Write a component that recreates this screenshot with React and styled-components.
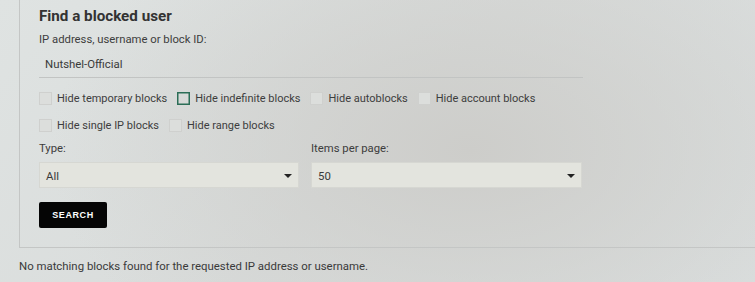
import React from "react";
import styled, { createGlobalStyle } from "styled-components";

const GlobalStyle = createGlobalStyle`
  html, body {
    margin: 0;
    padding: 0;
  }
  body {
    width: 755px;
    height: 282px;
    overflow: hidden;
    font-family: Roboto, "Liberation Sans", Arial, sans-serif;
    color: #3a3a3a;
    background:
      radial-gradient(ellipse 420px 260px at 470px 150px, #cdcdca 0%, rgba(205,205,202,0) 100%),
      linear-gradient(135deg, #dfe3e2 0%, #d9dcdb 50%, #dbdfdf 100%);
  }
`;

const filters = [
  [
    { label: "Hide temporary blocks" },
    { label: "Hide indefinite blocks", focused: true },
    { label: "Hide autoblocks" },
    { label: "Hide account blocks" },
  ],
  [{ label: "Hide single IP blocks" }, { label: "Hide range blocks" }],
];

const App = () => {
  return (
    <>
      <GlobalStyle />
      <Page>
        <Panel>
          <Heading>Find a blocked user</Heading>
          <Label>IP address, username or block ID:</Label>
          <TextField>Nutshel-Official</TextField>
          <Checks>
            {filters.map((row, i) => (
              <CheckRow key={i}>
                {row.map((f) => (
                  <CheckItem key={f.label}>
                    <Box $focused={f.focused} />
                    {f.label}
                  </CheckItem>
                ))}
              </CheckRow>
            ))}
          </Checks>
          <SelectGrid>
            <Field>
              <Label>Type:</Label>
              <Select>
                All
                <Caret />
              </Select>
            </Field>
            <Field>
              <Label>Items per page:</Label>
              <Select>
                50
                <Caret />
              </Select>
            </Field>
          </SelectGrid>
          <SearchButton>Search</SearchButton>
        </Panel>
        <Notice>No matching blocks found for the requested IP address or username.</Notice>
      </Page>
    </>
  );
};

const Page = styled.div`
  display: flex;
  flex-direction: column;
  padding-left: 19px;
`;

const Panel = styled.div`
  border-left: 1px solid #c4c6c5;
  border-bottom: 1px solid #c4c6c5;
  padding: 8px 0 19px 19px;
  display: flex;
  flex-direction: column;
`;

const Heading = styled.h2`
  margin: 0 0 7px;
  font-size: 15.2px;
  line-height: 17px;
  font-weight: 700;
  color: #333;
`;

const Label = styled.div`
  font-size: 11.3px;
  line-height: 15px;
  color: #3d3d3d;
`;

const TextField = styled.div`
  width: 538px;
  height: 26px;
  margin-top: 4px;
  padding-left: 6px;
  font-size: 11.4px;
  line-height: 26px;
  color: #3a3a3a;
  border-bottom: 1px solid #c2c4c3;
`;

const Checks = styled.div`
  display: flex;
  flex-direction: column;
  margin-top: 7px;
`;

const CheckRow = styled.div`
  display: flex;
  gap: 10px;
  height: 27px;
  align-items: center;
`;

const CheckItem = styled.label`
  display: flex;
  align-items: center;
  gap: 5px;
  font-size: 11px;
  color: #3d3d3d;
`;

const Box = styled.span`
  width: 11px;
  height: 11px;
  border: 1px solid ${(p) => (p.$focused ? "#2b6e57" : "#cfd0ce")};
  background: ${(p) => (p.$focused ? "transparent" : "#dcdedc")};
  box-shadow: ${(p) => (p.$focused ? "inset 0 0 0 0.5px #2b6e57" : "none")};
`;

const SelectGrid = styled.div`
  display: grid;
  grid-template-columns: 260px 271px;
  gap: 12px;
  margin-top: 2px;
`;

const Field = styled.div`
  display: flex;
  flex-direction: column;
  gap: 6px;
`;

const Select = styled.div`
  position: relative;
  height: 26px;
  padding-left: 6px;
  font-size: 11.4px;
  line-height: 26px;
  color: #3a3a3a;
  background: #e3e4de;
  border: 1px solid #d6d7d2;
  box-sizing: border-box;
`;

const Caret = styled.span`
  position: absolute;
  right: 6px;
  top: 11px;
  width: 0;
  height: 0;
  border-left: 4px solid transparent;
  border-right: 4px solid transparent;
  border-top: 4px solid #222;
`;

const SearchButton = styled.button`
  align-self: flex-start;
  margin-top: 14px;
  width: 68px;
  height: 26px;
  padding: 0;
  background: #050505;
  border: none;
  border-radius: 2px;
  color: #fff;
  font-family: "Liberation Sans", Arial, sans-serif;
  font-size: 9px;
  font-weight: 700;
  letter-spacing: 0.6px;
  text-transform: uppercase;
`;

const Notice = styled.p`
  margin: 11px 0 0;
  font-size: 11.4px;
  line-height: 15px;
  color: #3a3a3a;
`;

export default App;
